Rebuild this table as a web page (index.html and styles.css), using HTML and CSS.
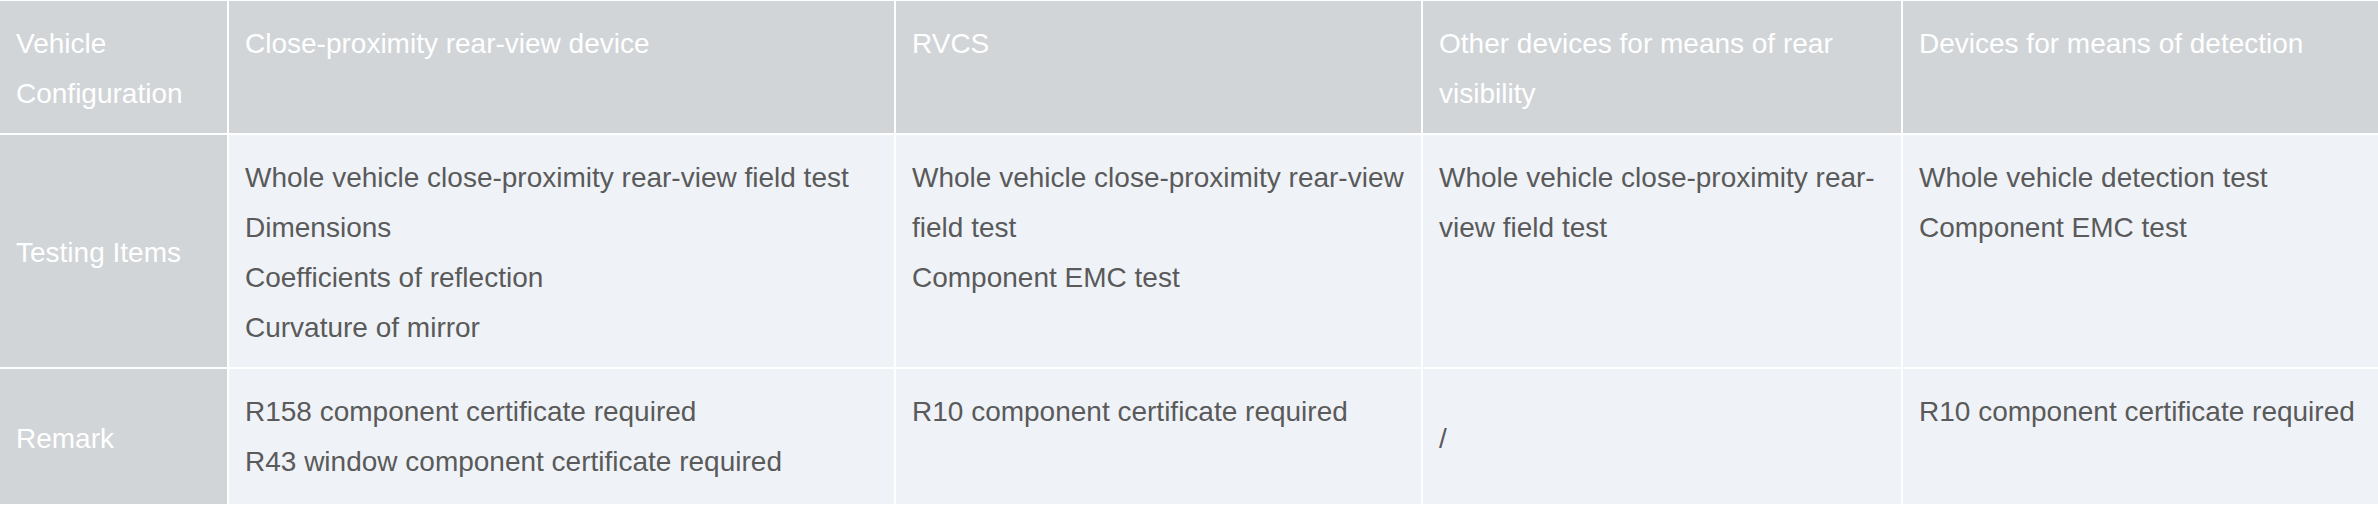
FILE: index.html
```html
<!DOCTYPE html>
<html lang="en">
<head>
<meta charset="utf-8">
<title>Vehicle Configuration Testing</title>
<link rel="stylesheet" href="styles.css">
</head>
<body>
<div class="spec-table">
  <div class="cell head label">Vehicle Configuration</div>
  <div class="cell head">Close-proximity rear-view device</div>
  <div class="cell head">RVCS</div>
  <div class="cell head">Other devices for means of rear visibility</div>
  <div class="cell head">Devices for means of detection</div>

  <div class="cell label mid">Testing Items</div>
  <div class="cell body">
    <div>Whole vehicle close-proximity rear-view field test</div>
    <div>Dimensions</div>
    <div>Coefficients of reflection</div>
    <div>Curvature of mirror</div>
  </div>
  <div class="cell body">
    <div>Whole vehicle close-proximity rear-view field test</div>
    <div>Component EMC test</div>
  </div>
  <div class="cell body">
    <div>Whole vehicle close-proximity rear-view field test</div>
  </div>
  <div class="cell body">
    <div>Whole vehicle detection test</div>
    <div>Component EMC test</div>
  </div>

  <div class="cell label mid">Remark</div>
  <div class="cell body">
    <div>R158 component certificate required</div>
    <div>R43 window component certificate required</div>
  </div>
  <div class="cell body">
    <div>R10 component certificate required</div>
  </div>
  <div class="cell body mid">
    <div>/</div>
  </div>
  <div class="cell body">
    <div>R10 component certificate required</div>
  </div>
</div>
</body>
</html>
```

FILE: styles.css
```css
html, body {
  margin: 0;
  padding: 0;
  background: #ffffff;
}

body {
  font-family: "Liberation Sans", Arial, sans-serif;
  font-size: 28px;
  line-height: 50px;
  width: 2378px;
  height: 506px;
  overflow: hidden;
}

.spec-table {
  display: grid;
  grid-template-columns: 227px 665px 525px 478px 475px;
  grid-template-rows: 132px 232px 135px;
  gap: 2px;
  padding-top: 1px;
  background: #ffffff;
}

.cell {
  padding: 18px 16px 14px 16px;
  box-sizing: border-box;
  display: flex;
  flex-direction: column;
  justify-content: flex-start;
}

.head {
  background: #d1d5d8;
  color: #ffffff;
}

.label {
  background: #d1d5d8;
  color: #ffffff;
}

.body {
  background: #eff3f8;
  color: #5a5a5a;
}

.mid {
  justify-content: center;
}
```
